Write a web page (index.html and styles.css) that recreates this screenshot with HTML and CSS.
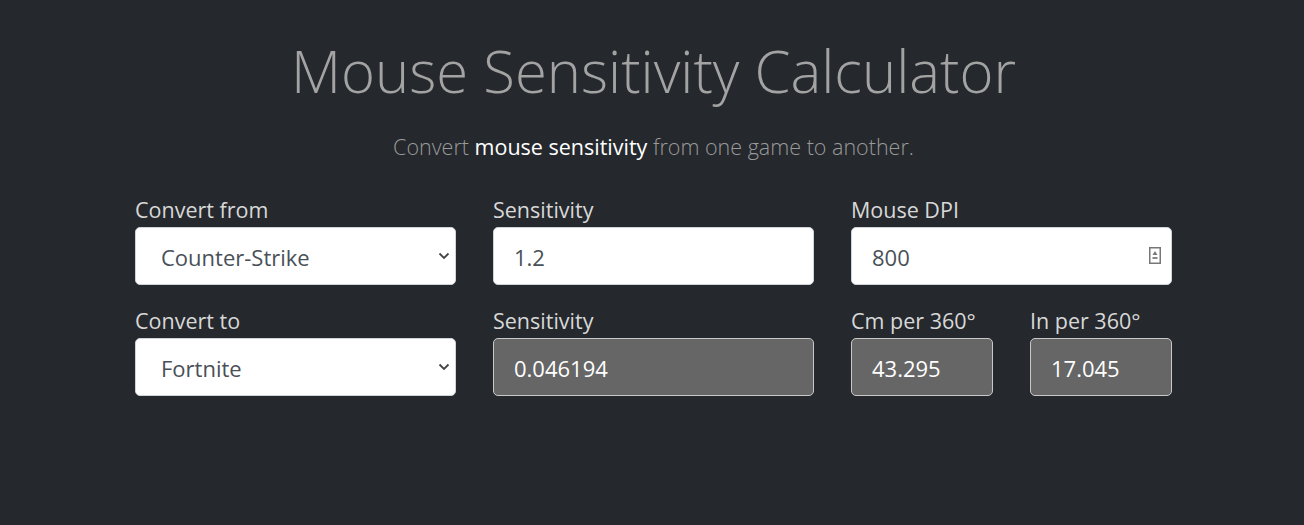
FILE: index.html
```html
<!DOCTYPE html>
<html lang="en">
<head>
<meta charset="utf-8">
<title>Mouse Sensitivity Calculator</title>
<link rel="stylesheet" href="styles.css">
</head>
<body>
<main class="page">
  <h1 class="title">Mouse Sensitivity Calculator</h1>
  <p class="lead">Convert <span class="hl">mouse sensitivity</span> from one game to another.</p>
  <div class="form">
    <div class="field">
      <label class="label">Convert from</label>
      <div class="control select">Counter-Strike
        <svg class="chev" width="12" height="8" viewBox="0 0 12 8"><path d="M1.5 1.5 L6 6 L10.5 1.5" fill="none" stroke="#444" stroke-width="1.8"/></svg>
      </div>
    </div>
    <div class="field">
      <label class="label">Sensitivity</label>
      <div class="control">1.2</div>
    </div>
    <div class="field">
      <label class="label">Mouse DPI</label>
      <div class="control number">800
        <svg class="spin" width="12" height="17" viewBox="0 0 12 17"><rect x="0.75" y="0.75" width="10.5" height="15.5" fill="#fff" stroke="#777" stroke-width="1.5"/><path d="M6 4 L8.5 8 L3.5 8 Z" fill="#777"/><rect x="3.5" y="10" width="5" height="2" fill="#888"/></svg>
      </div>
    </div>
    <div class="field">
      <label class="label">Convert to</label>
      <div class="control select">Fortnite
        <svg class="chev" width="12" height="8" viewBox="0 0 12 8"><path d="M1.5 1.5 L6 6 L10.5 1.5" fill="none" stroke="#444" stroke-width="1.8"/></svg>
      </div>
    </div>
    <div class="field">
      <label class="label">Sensitivity</label>
      <div class="control out">0.046194</div>
    </div>
    <div class="pair">
      <div class="field">
        <label class="label">Cm per 360°</label>
        <div class="control out">43.295</div>
      </div>
      <div class="field">
        <label class="label">In per 360°</label>
        <div class="control out">17.045</div>
      </div>
    </div>
  </div>
</main>
</body>
</html>
```
FILE: styles.css
```css
html, body {
  margin: 0;
  padding: 0;
}
body {
  background: #25282d;
  font-family: "Open Sans", "Noto Sans", "Liberation Sans", sans-serif;
  color: #d4d4d4;
  height: 525px;
}
.page {
  width: 1037px;
  margin-left: calc(50% - 517px);
  padding-top: 36px;
}
.title {
  margin: 0;
  text-align: center;
  font-size: 58px;
  font-weight: 300;
  line-height: 70px;
  color: #a3a3a3;
}
.lead {
  margin: 26px 0 0;
  text-align: center;
  font-size: 21.5px;
  font-weight: 300;
  line-height: 30px;
  color: #9a9a9a;
}
.hl {
  color: #ffffff;
  font-weight: 400;
}
.form {
  margin-top: 33px;
  display: grid;
  grid-template-columns: 321px 321px 321px;
  column-gap: 37px;
  row-gap: 21px;
}
.pair {
  display: grid;
  grid-template-columns: 142px 142px;
  column-gap: 37px;
}
.field {
  display: flex;
  flex-direction: column;
}
.label {
  font-size: 21.5px;
  line-height: 30px;
  margin-bottom: 2px;
  color: #d8d8d8;
}
.control {
  position: relative;
  box-sizing: border-box;
  height: 58px;
  border: 1px solid #ced4da;
  border-radius: 5px;
  background: #ffffff;
  color: #495057;
  font-size: 22px;
  line-height: 52px;
  padding-top: 3px;
  padding-left: 20px;
}
.select {
  padding-left: 25px;
}
.out {
  background: #666666;
  color: #ffffff;
  border-color: #c8c8c8;
}
.chev {
  position: absolute;
  right: 5px;
  top: 24px;
}
.spin {
  position: absolute;
  right: 10px;
  top: 19px;
}
```
